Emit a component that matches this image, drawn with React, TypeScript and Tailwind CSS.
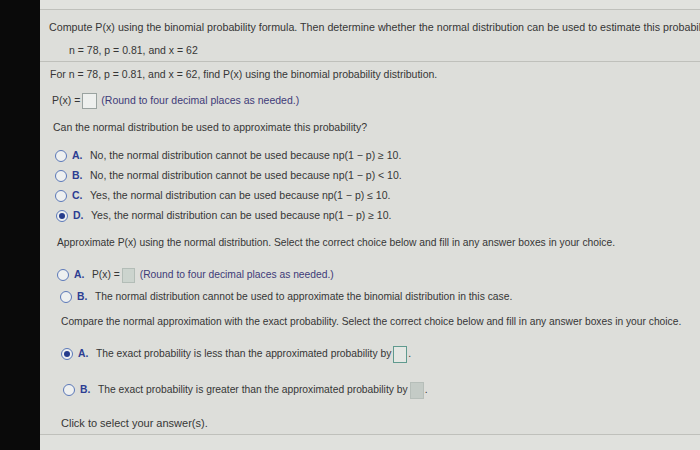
import React from 'react';

const FONT = { fontFamily: '"Liberation Sans", Arial, sans-serif' };

function Radio({ checked = false }: { checked?: boolean }) {
  return (
    <span className="flex h-[12px] w-[12px] shrink-0 items-center justify-center rounded-full border-[1.5px] border-[#5b78b8] bg-[#eef0f0]">
      {checked && <span className="h-[6px] w-[6px] rounded-full bg-[#263c8c]" />}
    </span>
  );
}

function Box({ className = '' }: { className?: string }) {
  return <span className={`inline-block ${className}`} />;
}

function Option({
  letter,
  checked,
  children,
  className = '',
}: {
  letter: string;
  checked?: boolean;
  children: React.ReactNode;
  className?: string;
}) {
  return (
    <div className={`flex items-center ${className}`}>
      <Radio checked={checked} />
      <span className="ml-[5px] w-[18px] font-bold text-[#2c3d92]">{letter}.</span>
      <span className="flex items-center">{children}</span>
    </div>
  );
}

export default function App() {
  return (
    <div className="flex h-[450px] w-[700px] overflow-hidden bg-black text-[10.5px] text-[#363636]" style={FONT}>
      <div className="w-[40px] shrink-0 bg-[#0a0a0a]" />
      <div className="flex min-w-0 flex-1 flex-col bg-[#dddeda]">
        <div className="h-[10px] border-b border-[#bfc0bb] bg-[#e1e2de]" />

        <div className="flex h-[34px] items-center overflow-hidden whitespace-nowrap pl-[9px] text-[10.7px]">
          Compute P(x) using the binomial probability formula. Then determine whether the normal distribution can be used to estimate this probability.
        </div>
        <div className="flex h-[14px] items-center pl-[29px]">n = 78, p = 0.81, and x = 62</div>
        <div className="h-[4px] border-b border-[#bfc0bb]" />

        <div className="flex h-[26px] items-center pl-[10px]">
          For n = 78, p = 0.81, and x = 62, find P(x) using the binomial probability distribution.
        </div>
        <div className="flex h-[26px] items-center pl-[12px]">
          <span>P(x) =</span>
          <Box className="ml-[2px] h-[16px] w-[15px] border border-[#9aa3a0] bg-[#eef0ee]" />
          <span className="ml-[4px] text-[#3d3b78]">(Round to four decimal places as needed.)</span>
        </div>
        <div className="flex h-[28px] items-center pl-[13px]">
          Can the normal distribution be used to approximate this probability?
        </div>

        <div className="mt-[4px] flex flex-col">
          <Option letter="A" className="h-[20px] pl-[15px]">
            No, the normal distribution cannot be used because np(1 − p) ≥ 10.
          </Option>
          <Option letter="B" className="h-[20px] pl-[15px]">
            No, the normal distribution cannot be used because np(1 − p) &lt; 10.
          </Option>
          <Option letter="C" className="h-[20px] pl-[15px]">
            Yes, the normal distribution can be used because np(1 − p) ≤ 10.
          </Option>
          <Option letter="D" checked className="h-[20px] pl-[16px]">
            Yes, the normal distribution can be used because np(1 − p) ≥ 10.
          </Option>
        </div>

        <div className="flex h-[34px] items-center whitespace-nowrap pl-[17px] text-[10.3px]">
          Approximate P(x) using the normal distribution. Select the correct choice below and fill in any answer boxes in your choice.
        </div>

        <div className="mt-[5px] flex flex-col text-[10.3px]">
          <Option letter="A" className="h-[20px] pl-[17px]">
            <span>P(x) =</span>
            <Box className="ml-[2px] h-[15px] w-[13px] border border-[#b3bdb7] bg-[#ccd4ce]" />
            <span className="ml-[5px] text-[#3d3b78]">(Round to four decimal places as needed.)</span>
          </Option>
          <Option letter="B" className="mt-[2px] h-[20px] pl-[20px]">
            The normal distribution cannot be used to approximate the binomial distribution in this case.
          </Option>
        </div>

        <div className="flex h-[30px] items-center whitespace-nowrap pl-[21px] text-[10.25px]">
          Compare the normal approximation with the exact probability. Select the correct choice below and fill in any answer boxes in your choice.
        </div>

        <div className="flex flex-col text-[10.3px]">
          <Option letter="A" checked className="mt-[5px] h-[24px] pl-[21px]">
            <span>The exact probability is less than the approximated probability by</span>
            <Box className="ml-[2px] h-[17px] w-[14px] border border-[#5f9a8e] bg-[#e4e7e3]" />
            <span className="ml-[1px]">.</span>
          </Option>
          <Option letter="B" className="mt-[12px] h-[24px] pl-[23px]">
            <span>The exact probability is greater than the approximated probability by</span>
            <Box className="ml-[2px] h-[17px] w-[14px] border border-[#b6beb9] bg-[#c4cbc6]" />
            <span className="ml-[1px]">.</span>
          </Option>
        </div>

        <div className="mt-[11px] flex h-[22px] items-center border-b border-[#bfc0bb] pl-[21px] text-[11px]">
          Click to select your answer(s).
        </div>
        <div className="flex-1 bg-[#e0e1dd]" />
      </div>
    </div>
  );
}
